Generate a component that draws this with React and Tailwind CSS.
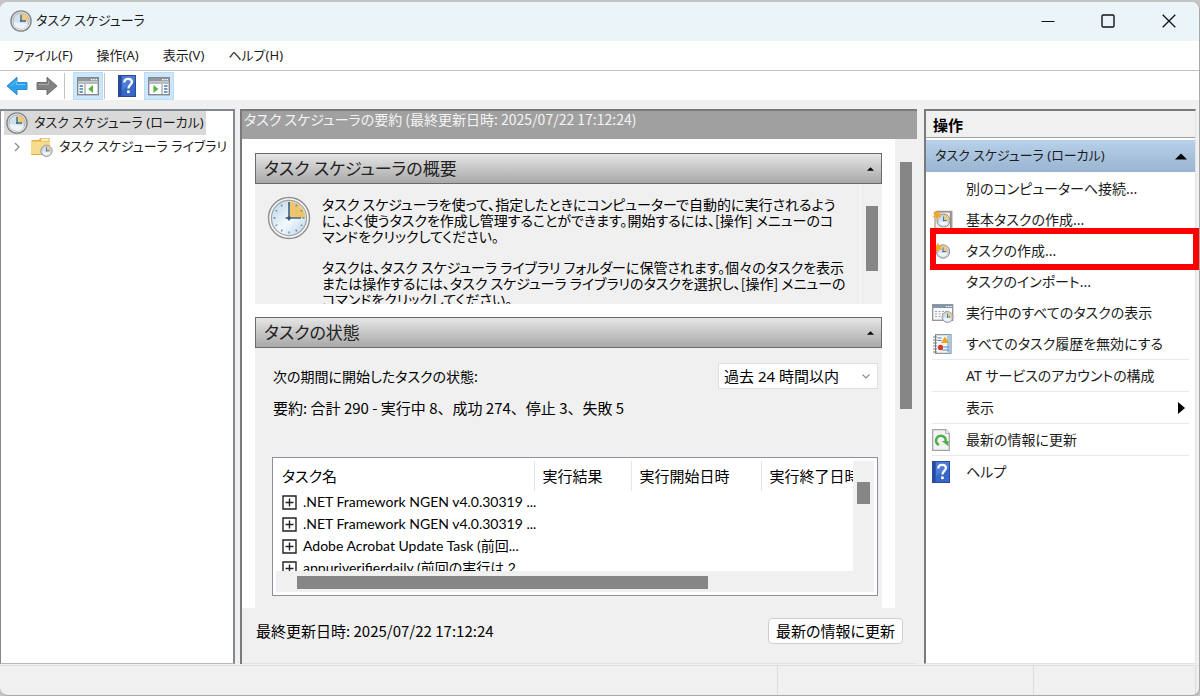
import React from "react";

const UI = "font-['Noto_Sans','Noto_Sans_CJK_JP',sans-serif] [font-feature-settings:'palt']";
const GOTHIC = "font-['Noto_Sans_CJK_JP',sans-serif] [font-feature-settings:'palt']";

function ClockFace({ cx = 12, cy = 12, r = 10 }) {
  return (
    <g>
      <circle cx={cx} cy={cy} r={r} fill="#ececec" stroke="#858585" strokeWidth={r * 0.14} />
      <circle cx={cx} cy={cy} r={r * 0.8} fill="#cfe0ef" stroke="#979fa7" strokeWidth={r * 0.08} />
      <path d={`M${cx - r * 0.75} ${cy + r * 0.1}A${r * 0.75} ${r * 0.75} 0 0 0 ${cx + r * 0.7} ${cy + r * 0.3}Z`} fill="#eef5fa" />
      <path d={`M${cx} ${cy}V${cy - r * 0.76}A${r * 0.76} ${r * 0.76} 0 0 1 ${cx + r * 0.76} ${cy}Z`} fill="#f0ca78" />
      <path d={`M${cx} ${cy - r * 0.62}V${cy + r * 0.1}M${cx - r * 0.1} ${cy}H${cx + r * 0.5}`} stroke="#44678f" strokeWidth={r * 0.14} fill="none" />
    </g>
  );
}

function ClockIcon({ className }) {
  return (
    <svg viewBox="0 0 24 24" className={className} aria-hidden="true">
      <ClockFace r={11} />
    </svg>
  );
}

function BigClock() {
  const ticks = [30, 60, 90, 120, 150, 180, 210, 240, 270, 300, 330, 0];
  return (
    <svg viewBox="0 0 44 44" className="size-11 shrink-0" aria-hidden="true">
      <defs>
        <linearGradient id="face" x1="0" y1="0" x2="1" y2="1">
          <stop offset="0" stopColor="#b9d3e8" />
          <stop offset="0.55" stopColor="#f3f9fd" />
          <stop offset="1" stopColor="#b5d0e6" />
        </linearGradient>
      </defs>
      <circle cx="22" cy="22" r="20.5" fill="#f7f7f7" stroke="#8f8f8f" strokeWidth="1.4" />
      <circle cx="22" cy="22" r="17.6" fill="url(#face)" stroke="#a2a2a2" strokeWidth="1.2" />
      <path d="M22 22V5.500A16.500 16.500 0 0 1 38.500 22Z" fill="#edc56c" />
      {ticks.map((a) => (
        <path key={a} d="M22 6.500v2" stroke="#5f88b0" strokeWidth="1.300" transform={`rotate(${a} 22 22)`} />
      ))}
      <path d="M22 6v18.500" stroke="#42668e" strokeWidth="1.700" />
      <path d="M18.500 22H34" stroke="#42668e" strokeWidth="1.700" />
      <circle cx="22" cy="22" r="1.800" fill="#35567c" />
    </svg>
  );
}

function FolderClock() {
  return (
    <svg viewBox="0 0 22 20" className="h-5 w-[22px] shrink-0" aria-hidden="true">
      <path d="M.5 3h7l2-2h9v3h.500v14H.5Z" fill="#e2b24c" />
      <path d="M10.500 1.800h7v2H10Z" fill="#fff6d8" />
      <path d="M.5 4.500h18.500V17.500H.5Z" fill="#f8dc8e" />
      <path d="M.5 17.500h18.500" stroke="#d9ab49" />
      <ClockFace cx={15.500} cy={13.800} r={5.700} />
    </svg>
  );
}

function ArrowIcon({ right }) {
  return (
    <svg viewBox="0 0 22 20" className="h-5 w-[22px]" aria-hidden="true">
      {right ? (
        <path d="M1 6.500h10V1.200L21 10l-10 8.800v-5.300H1Z" fill="#828282" stroke="#676767" strokeWidth="0.900" strokeLinejoin="round" />
      ) : (
        <path d="M21 6.500H11V1.200L1 10l10 8.800v-5.300h10Z" fill="#2ea3ea" stroke="#2582cc" strokeWidth="0.900" strokeLinejoin="round" />
      )}
      {right ? (
        <path d="M2.500 8.500h10V5" stroke="#a9a9a9" fill="none" />
      ) : (
        <path d="M19.500 8.500h-9V5L5 10" stroke="#6cc4f6" fill="none" />
      )}
    </svg>
  );
}

function PaneIcon({ right }) {
  return (
    <svg viewBox="0 0 22 20" className="h-5 w-[22px]" aria-hidden="true">
      <rect x="0.700" y="1.700" width="20.600" height="17" fill="#fff" stroke="#84898e" strokeWidth="1.400" />
      <path d="M1 2h20v3.500H1Z" fill="#8f979f" />
      <path d="M14 3.700h1.400M16.300 3.700h1.400M18.600 3.700H20" stroke="#fff" strokeWidth="1.200" />
      <path d="M1 7h20" stroke="#b4bbc1" strokeWidth="1.800" />
      {right ? (
        <>
          <path d="M14 8v10.500" stroke="#84898e" />
          <path d="M16 10h3.500M16 13h3.500M16 16h3.500" stroke="#3f7cb8" strokeWidth="1.400" />
          <path d="M5.500 9v8l4.800-4Z" fill="#55b43c" />
        </>
      ) : (
        <>
          <path d="M8 8v10.500" stroke="#84898e" />
          <path d="M2.500 10H6M2.500 13H6M2.500 16H6" stroke="#3f7cb8" strokeWidth="1.400" />
          <path d="M16 9v8l-4.800-4Z" fill="#55b43c" />
        </>
      )}
    </svg>
  );
}

function HelpIcon() {
  return (
    <svg viewBox="0 0 18 22" className="h-[22px] w-[18px]" aria-hidden="true">
      <rect x="0.500" y="0.500" width="17" height="21" fill="#3768c8" stroke="#2a4c9c" />
      <path d="M1 1h2.500v20H1Z" fill="#244a9e" />
      <path d="M4 1h13v6L4 15Z" fill="#5b8ae0" opacity="0.600" />
      <path d="M6.300 7.500C6.300 5 7.700 3.800 10 3.800c2.400 0 3.900 1.300 3.900 3.200 0 2.700-3.500 3.200-3.500 6.600" stroke="#fff" strokeWidth="2.300" fill="none" />
      <rect x="9.100" y="15.400" width="2.600" height="2.700" fill="#fff" />
    </svg>
  );
}

function BasicTaskIcon() {
  return (
    <svg viewBox="0 0 22 20" className="h-5 w-[22px]" aria-hidden="true">
      <path d="M3 2 5 .8h15.500v17l-2 1.700H3Z" fill="#a79a8f" />
      <rect x="3" y="2" width="15.500" height="17.500" fill="#efece8" stroke="#97897d" />
      <ClockFace cx={11.500} cy={10.500} r={6.500} />
      <path d="m5 0 1 3 3-.8L7.400 5 9.500 7.300l-3.100-.2L5 10 3.800 7.100.5 7.500 2.500 5 .8 2.300 4 3Z" fill="#f5a623" />
    </svg>
  );
}

function TaskIcon() {
  return (
    <svg viewBox="0 0 22 20" className="h-5 w-[22px]" aria-hidden="true">
      <ClockFace cx={11} cy={10.500} r={6.700} />
      <path d="m6 1.500 1 2.700 3.200-.4L8.600 6.300l1.700 2.400-3.100-.1L6 11.400 4.500 8.700 1 9 3.300 6.300 1.500 3.500l3.300.7Z" fill="#f5a623" />
    </svg>
  );
}

function RunningIcon() {
  return (
    <svg viewBox="0 0 22 20" className="h-5 w-[22px]" aria-hidden="true">
      <rect x="0.700" y="1.700" width="20" height="15.600" fill="#fbfbfb" stroke="#8d9297" strokeWidth="1.300" />
      <path d="M1 2h19.500v3H1Z" fill="#7e98b2" />
      <path d="M14 3.500h1.300M16.200 3.500h1.300M18.400 3.500h1.300" stroke="#fff" />
      <path d="M3 8.500h12M3 11h9M3 13.500h6" stroke="#9aa2aa" strokeDasharray="2 1.500" />
      <ClockFace cx={15.500} cy={14} r={5.500} />
    </svg>
  );
}

function HistoryIcon() {
  return (
    <svg viewBox="0 0 20 20" className="size-5" aria-hidden="true">
      <rect x="3.500" y="0.700" width="15.500" height="18.600" fill="#f1f6fb" stroke="#6f7f90" />
      <path d="M15 1.500h3.500v17H15Z" fill="#a9c9e8" />
      <path d="M5.500 4h4M5.500 6.500h4M10 16h7M11.500 13h5.500" stroke="#5f86b0" />
      <path d="m13 2.500 4 6.500H9Z" fill="#f2a31b" />
      <circle cx="8.500" cy="13.500" r="2.700" fill="#d83a2b" />
      <path d="M1 3h4M1 6h4M1 9h4M1 12h4M1 15h4M1 18h4" stroke="#7b7b7b" strokeWidth="1.200" />
    </svg>
  );
}

function RefreshIcon() {
  return (
    <svg viewBox="0 0 18 22" className="h-[22px] w-[18px]" aria-hidden="true">
      <path d="M.7.700h13L17.300 4.300v17H.7Z" fill="#f3f3f3" stroke="#a3a3a3" strokeWidth="1.200" />
      <path d="M13.700.700v3.600h3.600" fill="#fff" stroke="#a3a3a3" />
      <path d="M7 15.900A4.800 4.800 0 1 1 13.600 12.500" stroke="#4fae4a" strokeWidth="2.600" fill="none" />
      <path d="M9.600 12h6.900v5.200Z" fill="#4fae4a" />
    </svg>
  );
}

function UpTriangle({ className }) {
  return (
    <svg viewBox="0 0 12 6" className={className} aria-hidden="true">
      <path d="M6 0 12 6H0Z" fill="#000" />
    </svg>
  );
}

function SectionHeader({ children }) {
  return (
    <button type="button" className="flex h-[31px] w-full shrink-0 items-center justify-between border border-[#6a6a6a] bg-linear-to-b from-[#e6e6e6] to-[#a8a8a8] pr-[7px] pl-2 text-left text-[17px] text-[#222]">
      <span>{children}</span>
      <UpTriangle className="h-1 w-[7px]" />
    </button>
  );
}

const ACTIONS = [
  { label: "別のコンピューターへ接続..." },
  { label: "基本タスクの作成...", icon: BasicTaskIcon },
  { label: "タスクの作成...", icon: TaskIcon, marked: true },
  { label: "タスクのインポート..." },
  { label: "実行中のすべてのタスクの表示", icon: RunningIcon },
  { label: "すべてのタスク履歴を無効にする", icon: HistoryIcon },
];

const MORE_ACTIONS = [
  { label: "AT サービスのアカウントの構成" },
  { label: "表示", submenu: true },
  { label: "最新の情報に更新", icon: RefreshIcon },
  { label: "ヘルプ", icon: HelpIcon },
];

function ActionRow({ label, icon: Icon, marked, submenu, divided }) {
  return (
    <li className={divided ? "relative h-[32px] border-t border-[#e9e9e9]" : "relative h-[31px]"}>
      <button type="button" className="flex h-full w-full items-center text-left whitespace-nowrap">
        <span className="flex w-[34px] shrink-0 items-center">{Icon && <Icon />}</span>
        <span className="flex-1">{label}</span>
        {submenu && (
          <svg viewBox="0 0 7 12" className="mr-1 h-3 w-[7px]" aria-hidden="true">
            <path d="M0 0 7 6 0 12Z" fill="#000" />
          </svg>
        )}
      </button>
      {marked && <span className="pointer-events-none absolute -top-[7px] -right-[10px] -bottom-[4px] -left-[2px] border-[6px] border-[#fe0000]" />}
    </li>
  );
}

const TASKS = [
  ".NET Framework NGEN v4.0.30319 ...",
  ".NET Framework NGEN v4.0.30319 ...",
  "Adobe Acrobat Update Task (前回...",
  "appuriverifierdaily (前回の実行は 2",
];

const MENUS = ["ファイル(F)", "操作(A)", "表示(V)", "ヘルプ(H)"];

function TitleBar() {
  return (
    <header className="flex h-[39px] shrink-0 items-center bg-[#ebf4f8] pb-0.5 pl-2.5">
      <ClockIcon className="size-[22px]" />
      <h1 className="ml-1 flex-1 text-[13px]">タスク スケジューラ</h1>
      <button type="button" aria-label="最小化" className="flex h-full w-[60px] items-center justify-center">
        <svg viewBox="0 0 14 14" className="size-3.5"><path d="M.5 7.500h13" stroke="#111" strokeWidth="1" /></svg>
      </button>
      <button type="button" aria-label="最大化" className="flex h-full w-[60px] items-center justify-center">
        <svg viewBox="0 0 14 14" className="size-3.5"><rect x="1" y="1" width="12" height="12" rx="1.200" fill="none" stroke="#111" strokeWidth="1.400" /></svg>
      </button>
      <button type="button" aria-label="閉じる" className="flex h-full w-[61px] items-center justify-center">
        <svg viewBox="0 0 14 14" className="size-3.5"><path d="m.7.700 12.600 12.600M13.300.700.7 13.300" stroke="#111" strokeWidth="1.300" /></svg>
      </button>
    </header>
  );
}

function Toolbar() {
  return (
    <div className="flex h-[29px] shrink-0 items-center bg-white pl-1.5">
      <button type="button" aria-label="戻る"><ArrowIcon /></button>
      <button type="button" aria-label="進む" className="ml-2"><ArrowIcon right /></button>
      <span className="ml-1.5 h-[26px] w-px bg-[#c4c4c4]" />
      <button type="button" aria-label="ツリー" className="ml-2 flex h-7 w-[30px] items-center justify-center border border-[#b9dcf8] bg-[#cce6fc]"><PaneIcon /></button>
      <span className="ml-px h-[26px] w-px bg-[#c4c4c4]" />
      <button type="button" aria-label="ヘルプ" className="ml-[13px]"><HelpIcon /></button>
      <button type="button" aria-label="操作ウィンドウ" className="ml-2 flex h-7 w-[30px] items-center justify-center border border-[#b9dcf8] bg-[#cce6fc]"><PaneIcon right /></button>
    </div>
  );
}

function TreePane() {
  return (
    <nav className="w-[235px] shrink-0 border-t-2 border-r-2 border-b border-l border-[#828790] border-b-[#b4b8be] bg-white pl-[3px] text-[13px] whitespace-nowrap">
      <ul>
        <li>
          <a href="#root" className="flex h-6 w-fit items-center bg-[#d9d9d9] pr-0.5 pl-0.5">
            <ClockIcon className="size-[22px] shrink-0" />
            <span className="ml-1.5">タスク スケジューラ (ローカル)</span>
          </a>
        </li>
        <li>
          <a href="#library" className="flex h-6 items-center pl-2.5">
            <svg viewBox="0 0 6 10" className="h-2.5 w-1.5 shrink-0" aria-hidden="true"><path d="m1 1 4 4-4 4" fill="none" stroke="#8a8a8a" strokeWidth="1.200" /></svg>
            <span className="ml-[11px]"><FolderClock /></span>
            <span className="ml-1.5">タスク スケジューラ ライブラリ</span>
          </a>
        </li>
      </ul>
    </nav>
  );
}

function TaskList() {
  return (
    <div className="mt-[38px] mr-1 ml-[17px] border border-[#8a919c] bg-white p-[3px]">
      <div className="flex h-[110px]">
        <div className="min-w-0 flex-1 overflow-hidden">
          <table className="w-[620px] table-fixed border-collapse text-[15px] whitespace-nowrap">
            <colgroup>
              <col className="w-[258px]" />
              <col className="w-[97px]" />
              <col className="w-[130px]" />
              <col />
            </colgroup>
            <thead>
              <tr className="h-[30px] text-left">
                <th className="border-r border-[#e5e5e5] pl-1.5 font-normal">タスク名</th>
                <th className="border-r border-[#e5e5e5] pl-2 font-normal">実行結果</th>
                <th className="border-r border-[#e5e5e5] pl-2 font-normal">実行開始日時</th>
                <th className="pl-2 font-normal">実行終了日時</th>
              </tr>
            </thead>
            <tbody className="font-['Lato','Noto_Sans_CJK_JP',sans-serif] text-[14px]">
              {TASKS.map((t, i) => (
                <tr key={i} className="h-[22px]">
                  <td className="p-0 pl-1.5 leading-[22px]">
                    <span className="flex items-center">
                      <button type="button" aria-label="展開" className="mr-1.5">
                        <svg viewBox="0 0 15 15" className="size-[15px]"><path d="M1 1h13v13H1ZM7.500 3.500v8M3.500 7.500h8" fill="none" stroke="#222" strokeWidth="1.400" /></svg>
                      </button>
                      {t}
                    </span>
                  </td>
                  <td /><td /><td />
                </tr>
              ))}
            </tbody>
          </table>
        </div>
        <div className="w-[21px] shrink-0 bg-[#f0f0f0] pt-[21px] pl-1">
          <div className="h-[22px] w-[13px] bg-[#868686]" />
        </div>
      </div>
      <div className="h-[21px] bg-[#f0f0f0] px-[21px] pt-[5px]">
        <div className="h-[13px] w-[74%] bg-[#868686]" />
      </div>
    </div>
  );
}

function SummaryPane() {
  return (
    <main className={`${GOTHIC} flex min-w-0 flex-1 flex-col border-t-2 border-l-2 border-[#7a7a7a] bg-[#f0f0f0]`}>
      <h2 className="h-7 shrink-0 bg-[#a0a0a0] pl-0.5 text-[14px] leading-[17px] whitespace-nowrap text-[#f4f4f4]">
        タスク スケジューラの要約 (最終更新日時: 2025/07/22 17:12:24)
      </h2>
      <div className="flex flex-1">
        <div className={`${UI} flex min-w-0 flex-1 flex-col bg-white px-[13px] pt-[14px]`}>
          <SectionHeader>タスク スケジューラの概要</SectionHeader>
          <div className="flex h-[120px] shrink-0 overflow-hidden bg-[#f0f0f0]">
            <div className="mt-3 ml-3"><BigClock /></div>
            <div className={`${GOTHIC} mt-3 ml-[11px] min-w-0 flex-1 text-[14px] leading-4 whitespace-nowrap text-black`}>
              <p>
                タスク スケジューラを使って、指定したときにコンピューターで自動的に実行されるよう<br />
                に、よく使うタスクを作成し管理することができます。開始するには、[操作] メニューのコ<br />
                マンドをクリックしてください。
              </p>
              <p className="mt-[15px]">
                タスクは、タスク スケジューラ ライブラリ フォルダーに保管されます。個々のタスクを表示<br />
                または操作するには、タスク スケジューラ ライブラリのタスクを選択し、[操作] メニューの<br />
                コマンドをクリックしてください。
              </p>
            </div>
            <div className="w-[22px] shrink-0 border-l border-[#f8f8f8] pt-[22px] pl-[5px]">
              <div className="h-[65px] w-3 bg-[#868686]" />
            </div>
          </div>
          <div className="mt-[13px]"><SectionHeader>タスクの状態</SectionHeader></div>
          <div className={`${GOTHIC} flex-1 bg-[#f0f0f0] pb-3 text-[15px] text-black`}>
            <div className="mt-[15px] flex h-[26px] items-center justify-between pr-1 pl-[18px]">
              <label htmlFor="period" className="text-[14px]">次の期間に開始したタスクの状態:</label>
              <span className={`${UI} relative h-[26px] w-40`}>
                <select id="period" className="h-full w-full appearance-none border border-[#e0e0e0] bg-white pl-[5px] text-[15px]">
                  <option>過去 24 時間以内</option>
                </select>
                <svg viewBox="0 0 8 5" className="pointer-events-none absolute top-[11px] right-2 h-[5px] w-2"><path d="m.5.500 3.500 3.500L7.500.500" fill="none" stroke="#8a8a8a" strokeWidth="1.100" /></svg>
              </span>
            </div>
            <p className="mt-2 h-[22px] pl-[18px] leading-[22px] [font-feature-settings:normal]">要約: 合計 290 - 実行中 8、成功 274、停止 3、失敗 5</p>
            <div className={UI}><TaskList /></div>
          </div>
        </div>
        <div className="w-[22px] shrink-0 pt-[23px] pl-[5px]">
          <div className="h-[247px] w-3 bg-[#868686]" />
        </div>
      </div>
      <footer className="flex h-14 shrink-0 items-center justify-between border-b border-[#e2e2e2] px-[14px] pb-[9px] text-[15px] text-black">
        <span>最終更新日時: 2025/07/22 17:12:24</span>
        <button type="button" className="h-[26px] w-[135px] rounded border border-[#cfcfcf] bg-[#fdfdfd] leading-[22px] whitespace-nowrap">最新の情報に更新</button>
      </footer>
    </main>
  );
}

function ActionsPane() {
  return (
    <aside className="mr-[3px] w-[272px] shrink-0 border-t-2 border-r border-b border-l-2 border-t-[#7a7a7a] border-r-[#e2e2e2] border-b-[#e2e2e2] border-l-[#7a7a7a] bg-white text-[14px]">
      <h2 className="h-[27px] border-b border-[#a0a0a0] bg-[#f0f0f0] pl-[7px] text-[15px] leading-[28px] font-bold text-black">操作</h2>
      <button type="button" className="mt-0.5 flex h-8 w-full items-center justify-between bg-linear-to-b from-[#b9d1ea] to-[#99b4d1] pr-2 pl-[9px] text-[13px]">
        <span>タスク スケジューラ (ローカル)</span>
        <UpTriangle className="h-[7px] w-3" />
      </button>
      <ul className="px-1.5 pt-px">
        {ACTIONS.map((a) => <ActionRow key={a.label} {...a} />)}
        {MORE_ACTIONS.map((a) => <ActionRow key={a.label} {...a} divided />)}
      </ul>
    </aside>
  );
}

export default function App() {
  return (
    <div className={`${UI} flex min-h-screen flex-col bg-[#c4c4c4] pt-0.5 text-[#1c1c1c]`}>
      <div className="flex flex-1 flex-col overflow-hidden rounded-lg border-r border-b border-[#a8a8a8] bg-[#f0f0f0]">
        <TitleBar />
        <nav className="flex h-[30px] shrink-0 items-center gap-6 border-b border-[#c2c2c2] bg-white pl-[13px] text-[13px]">
          {MENUS.map((m) => <button key={m} type="button">{m}</button>)}
        </nav>
        <Toolbar />
        <div className="mt-[9px] flex flex-1">
          <TreePane />
          <div className="mr-[7px] ml-[5px] flex min-w-0 flex-1"><SummaryPane /></div>
          <ActionsPane />
        </div>
        <footer className="mt-px flex h-[30px] shrink-0 border-t border-[#e0e0e0]">
          <span className="flex-1" />
          <span className="w-64 border-l border-[#dcdcdc]" />
          <span className="mr-[3px] w-[163px] border-x border-[#dcdcdc]" />
        </footer>
      </div>
    </div>
  );
}
